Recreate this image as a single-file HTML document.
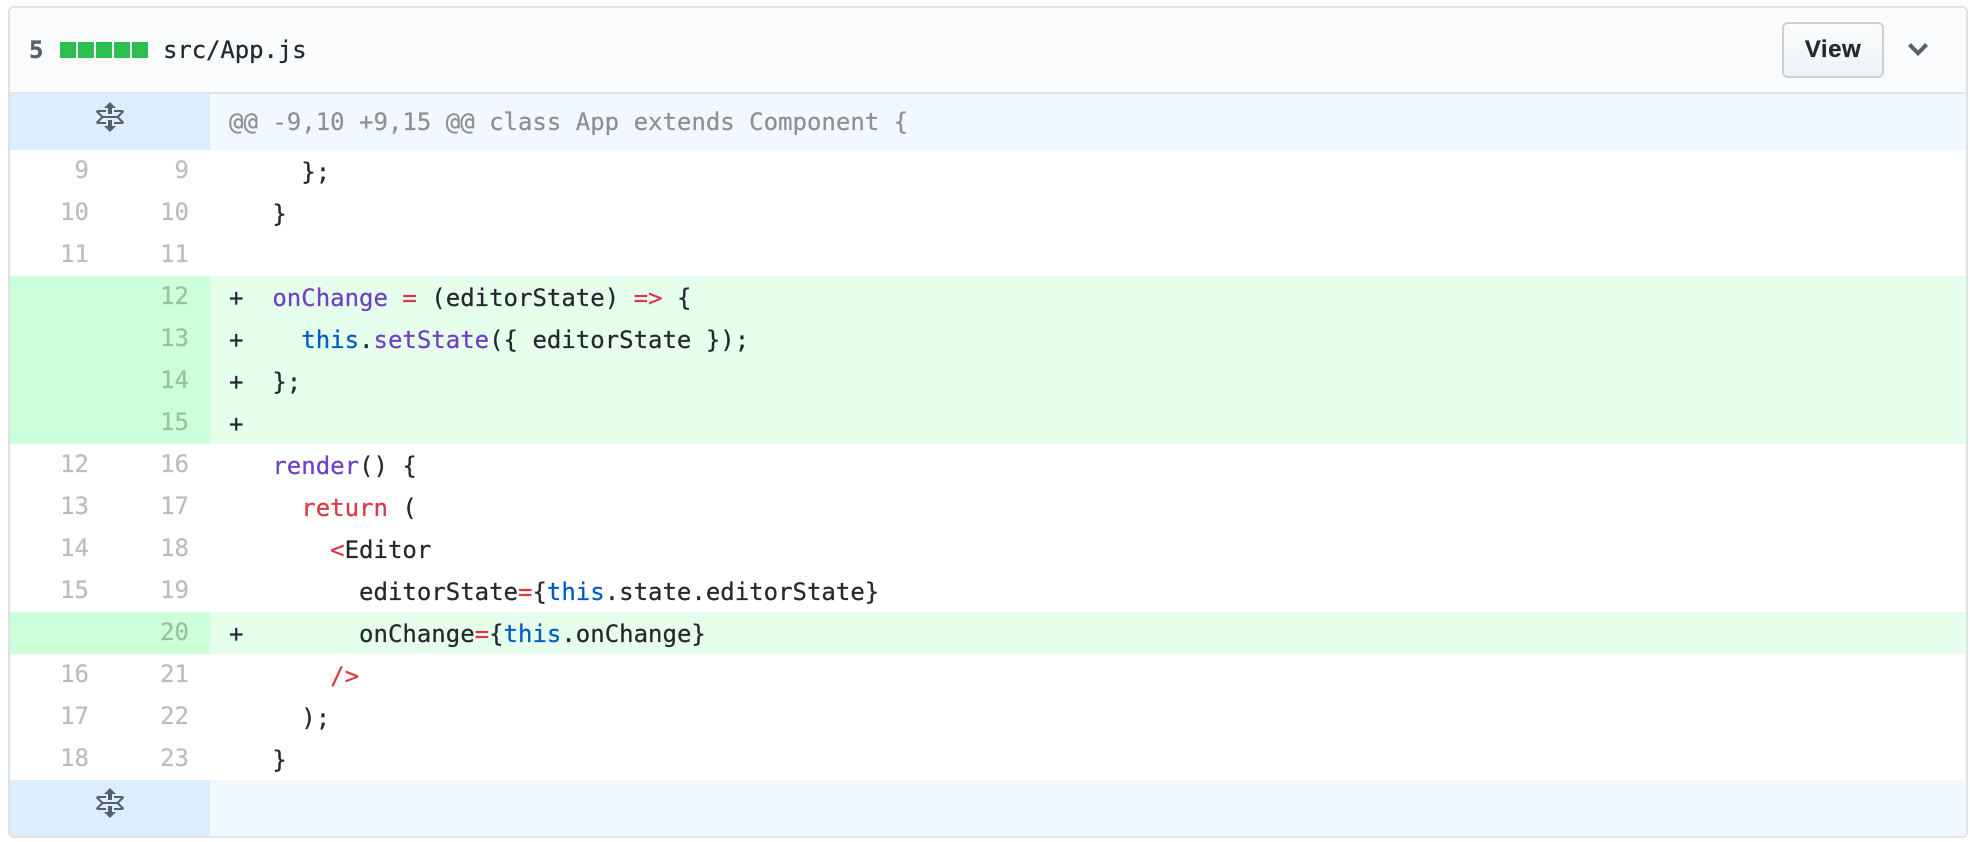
<!DOCTYPE html>
<html>
<head>
<meta charset="utf-8">
<style>
html,body{margin:0;padding:0;background:#fff;width:1970px;height:842px;overflow:hidden}
#box{position:absolute;left:8px;top:6px;width:1956px;height:828px;border:2px solid #dfe2e5;border-radius:6px;overflow:hidden;background:#fff;font-family:"DejaVu Sans Mono","Liberation Mono",monospace;font-size:24px;color:#24292e;-webkit-text-stroke:.25px}
#head{position:absolute;left:0;top:0;width:1956px;height:84px;background:#fafbfc;border-bottom:2px solid #e1e4e8}
#head .t{position:absolute;line-height:42px;top:21px;white-space:pre;letter-spacing:-.1px}
.b{position:absolute;top:34px;width:16px;height:16px;background:#2cbe4e}
#view{position:absolute;left:1772px;top:14px;width:98px;height:52px;border:2px solid #cdced0;border-radius:6px;background:linear-gradient(#fafbfc,#eff3f6);font:bold 24px/52px "Liberation Sans",Arial,sans-serif;letter-spacing:.5px;text-align:center;color:#24292e}
.r{position:absolute;left:0;width:1956px;height:42px;line-height:42px;white-space:pre}
.n{position:absolute;top:-1px;width:79px;height:100%;text-align:right;color:#bcbdbf}
.n1{left:0;padding-right:20px}
.n2{left:100px;padding-right:20px}
.nb{position:absolute;left:0;top:0;width:200px;height:100%}
.c{position:absolute;left:219px;top:1px}
.g{background:#e6ffed}
.g .nb{background:#cdffd8}
.g .n{color:#9bbfa3}
.h{background:#f1f8ff;height:56px;line-height:56px}
.h .nb{background:#dbedff}
.h .c{color:#8d9195;top:0}
.p{color:#6f42c1}.k{color:#d73a49}.u{color:#005cc5}
svg{position:absolute;fill:#586069}
</style>
</head>
<body>
<div id="box">
<div id="head">
<span class="t" style="left:19px;font-weight:bold;color:#586069">5</span>
<i class="b" style="left:50px"></i><i class="b" style="left:68px"></i><i class="b" style="left:86px"></i><i class="b" style="left:104px"></i><i class="b" style="left:122px"></i>
<span class="t" style="left:153px">src/App.js</span>
<div id="view">View</div>
<svg style="left:1898px;top:26px" width="20" height="32" viewBox="0 0 10 16"><path d="M5 11L0 6l1.5-1.5L5 8.25 8.5 4.5 10 6l-5 5z"/></svg>
</div>

<div class="r h" style="top:86px"><div class="nb"><svg style="left:86px;top:8px" width="28" height="32" viewBox="0 0 14 16"><path d="M11.5 7.5L14 10c0 .55-.45 1-1 1H9v-1h3.5l-2-2h-7l-2 2H5v1H1c-.55 0-1-.45-1-1l2.5-2.5L0 5c0-.55.45-1 1-1h4v1H1.5l2 2h7l2-2H9V4h4c.55 0 1 .45 1 1l-2.5 2.5zM6 6h2V3h2L7 0 4 3h2v3zm2 3H6v3H4l3 3 3-3H8V9z"/></svg></div><span class="c">@@ -9,10 +9,15 @@ class App extends Component {</span></div>

<div class="r" style="top:142px"><span class="n n1">9</span><span class="n n2">9</span><span class="c">     };</span></div>
<div class="r" style="top:184px"><span class="n n1">10</span><span class="n n2">10</span><span class="c">   }</span></div>
<div class="r" style="top:226px"><span class="n n1">11</span><span class="n n2">11</span><span class="c"> </span></div>

<div class="r g" style="top:268px"><div class="nb"></div><span class="n n2">12</span><span class="c">+  <span class="p">onChange</span> <span class="k">=</span> (editorState) <span class="k">=&gt;</span> {</span></div>
<div class="r g" style="top:310px"><div class="nb"></div><span class="n n2">13</span><span class="c">+    <span class="u">this</span>.<span class="p">setState</span>({ editorState });</span></div>
<div class="r g" style="top:352px"><div class="nb"></div><span class="n n2">14</span><span class="c">+  };</span></div>
<div class="r g" style="top:394px"><div class="nb"></div><span class="n n2">15</span><span class="c">+</span></div>

<div class="r" style="top:436px"><span class="n n1">12</span><span class="n n2">16</span><span class="c">   <span class="p">render</span>() {</span></div>
<div class="r" style="top:478px"><span class="n n1">13</span><span class="n n2">17</span><span class="c">     <span class="k">return</span> (</span></div>
<div class="r" style="top:520px"><span class="n n1">14</span><span class="n n2">18</span><span class="c">       <span class="k">&lt;</span>Editor</span></div>
<div class="r" style="top:562px"><span class="n n1">15</span><span class="n n2">19</span><span class="c">         editorState<span class="k">=</span>{<span class="u">this</span>.state.editorState}</span></div>

<div class="r g" style="top:604px"><div class="nb"></div><span class="n n2">20</span><span class="c">+        onChange<span class="k">=</span>{<span class="u">this</span>.onChange}</span></div>

<div class="r" style="top:646px"><span class="n n1">16</span><span class="n n2">21</span><span class="c">       <span class="k">/&gt;</span></span></div>
<div class="r" style="top:688px"><span class="n n1">17</span><span class="n n2">22</span><span class="c">     );</span></div>
<div class="r" style="top:730px"><span class="n n1">18</span><span class="n n2">23</span><span class="c">   }</span></div>

<div class="r h" style="top:772px"><div class="nb"><svg style="left:86px;top:8px" width="28" height="32" viewBox="0 0 14 16"><path d="M11.5 7.5L14 10c0 .55-.45 1-1 1H9v-1h3.5l-2-2h-7l-2 2H5v1H1c-.55 0-1-.45-1-1l2.5-2.5L0 5c0-.55.45-1 1-1h4v1H1.5l2 2h7l2-2H9V4h4c.55 0 1 .45 1 1l-2.5 2.5zM6 6h2V3h2L7 0 4 3h2v3zm2 3H6v3H4l3 3 3-3H8V9z"/></svg></div></div>
</div>
</body>
</html>
